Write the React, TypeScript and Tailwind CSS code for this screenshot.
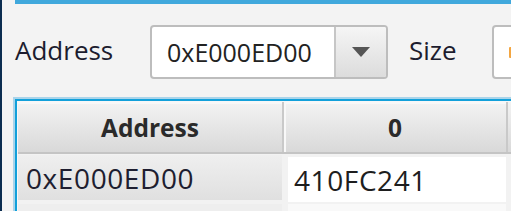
import React from "react";

const font = { fontFamily: '"Open Sans", "Noto Sans", sans-serif' };

function ComboBox({ value }: { value: string }) {
  return (
    <div className="flex h-[54px] w-[238px] shrink-0 overflow-hidden rounded-[4px] border-2 border-[#bdbdbd] bg-white">
      <div className="flex min-w-0 flex-1 items-center pl-[15px] pt-[2px] text-[25px] whitespace-nowrap text-[#222]">{value}</div>
      <div className="flex w-[52px] shrink-0 items-center justify-center border-l-2 border-[#c6c6c6] bg-gradient-to-b from-[#f5f5f5] to-[#dcdcdc]">
        <svg width="18" height="10" viewBox="0 0 18 10">
          <path d="M0 0 H18 L9 10 Z" fill="#555" />
        </svg>
      </div>
    </div>
  );
}

export default function App() {
  return (
    <div className="flex h-[211px] w-[511px] overflow-hidden bg-[#f3f3f3]" style={font}>
      <div className="w-[2px] shrink-0 bg-[#0b2d50]" />
      <div className="flex min-w-0 flex-1 flex-col pl-[11px]">
        <div className="ml-[2px] h-[4px] shrink-0 bg-[#40a8dc]" />

        <div className="mt-[21px] flex shrink-0 items-center">
          <span className="ml-[2px] w-[135px] shrink-0 pb-[4px] text-[26px] text-[#1c1c2e]">Address</span>
          <ComboBox value="0xE000ED00" />
          <span className="ml-[21px] w-[48px] shrink-0 pb-[4px] text-[26px] text-[#1c1c2e]">Size</span>
          <div className="ml-[35px] flex h-[54px] w-[120px] shrink-0 items-center rounded-[4px] border-2 border-[#bdbdbd] bg-white pl-[15px]">
            <span className="block h-[11px] w-[4px] rounded-[1px] bg-[#f3a642]" />
          </div>
        </div>

        <div className="mt-[18px] w-[520px] shrink-0 border-2 border-[#a9d4ea]">
          <div className="border-2 border-[#12a0da]">
            <div className="border border-[#f7f7f7] bg-[#f2f2f2]">
              {/* header */}
              <div className="flex h-[52px] border-b-2 border-[#c4c4c4]">
                <div className="flex w-[266px] shrink-0 items-center justify-center border-r-2 border-[#c9c9c9] bg-gradient-to-b from-[#f3f3f3] to-[#d9d9d9] pt-[3px] text-[24.5px] font-bold text-[#2a2a2a] shadow-[inset_0_2px_0_#f8f8f8]">
                  Address
                </div>
                <div className="flex w-[224px] shrink-0 items-center justify-center border-r-2 border-[#c9c9c9] bg-gradient-to-b from-[#f3f3f3] to-[#d9d9d9] pt-[3px] text-[24.5px] font-bold text-[#2a2a2a] shadow-[inset_2px_2px_0_#f8f8f8]">
                  0
                </div>
                <div className="flex-1 bg-gradient-to-b from-[#f3f3f3] to-[#d9d9d9]" />
              </div>
              {/* row */}
              <div className="flex h-[50px] pt-[1px]">
                <div className="flex h-[45px] w-[264px] shrink-0 items-center bg-gradient-to-b from-[#efefef] to-[#e0e0e0] pl-[8px] text-[28px] tracking-[0.6px] text-[#1e1e30]">
                  0xE000ED00
                </div>
                <div className="ml-[6px] mt-[2px] flex h-[45px] w-[218px] shrink-0 items-center bg-white pl-[6px] text-[28px] tracking-[0.6px] text-[#1e1e1e]">
                  410FC241
                </div>
              </div>
              <div className="flex h-[20px]">
                <div className="w-[264px] shrink-0 bg-[#eeeeee]" />
                <div className="ml-[6px] w-[218px] shrink-0 bg-[#f9f9f9]" />
              </div>
            </div>
          </div>
        </div>
      </div>
    </div>
  );
}
